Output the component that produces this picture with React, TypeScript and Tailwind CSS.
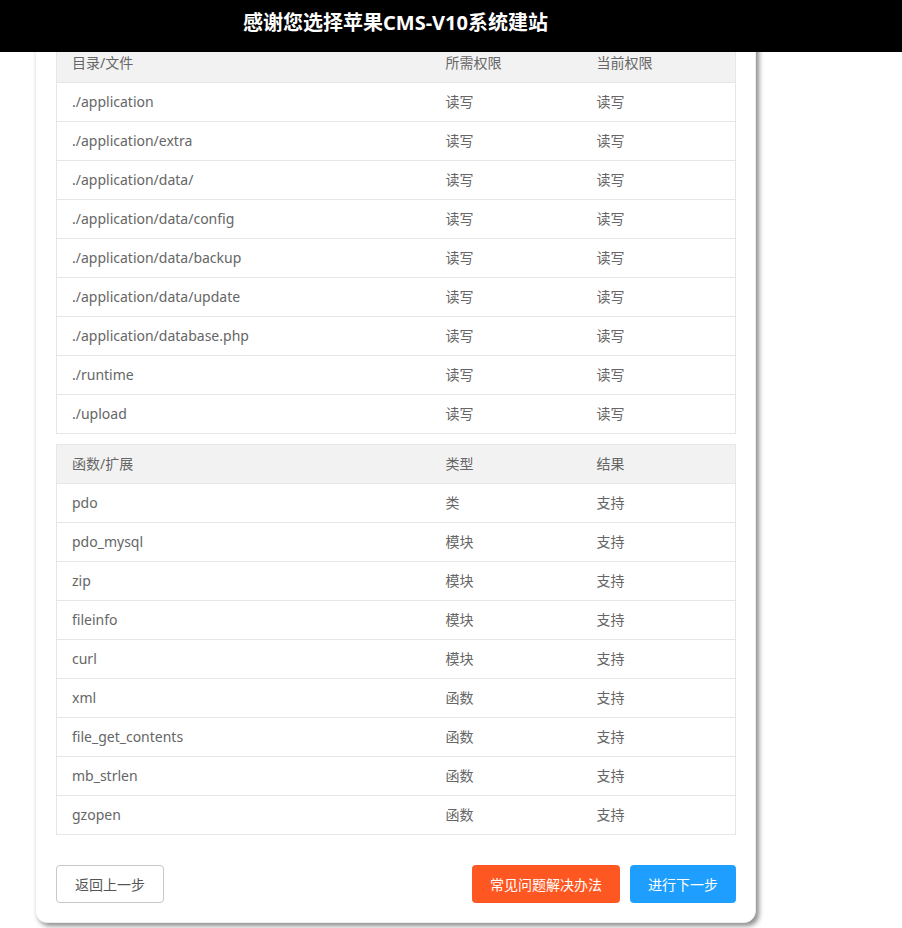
const dirs = [
  './application',
  './application/extra',
  './application/data/',
  './application/data/config',
  './application/data/backup',
  './application/data/update',
  './application/database.php',
  './runtime',
  './upload',
];

const exts = [
  { name: 'pdo', type: '类' },
  { name: 'pdo_mysql', type: '模块' },
  { name: 'zip', type: '模块' },
  { name: 'fileinfo', type: '模块' },
  { name: 'curl', type: '模块' },
  { name: 'xml', type: '函数' },
  { name: 'file_get_contents', type: '函数' },
  { name: 'mb_strlen', type: '函数' },
  { name: 'gzopen', type: '函数' },
];

function Row({ cells, head }: { cells: string[]; head?: boolean }) {
  return (
    <tr className={head ? 'bg-[#f2f2f2]' : 'bg-white'}>
      {cells.map((c, i) => (
        <td
          key={i}
          className={
            'border-b border-[#e6e6e6] px-[15px] py-[9px] leading-5 ' +
            (i === 0 ? 'w-[374px]' : i === 1 ? 'w-[151px]' : '')
          }
        >
          {c}
        </td>
      ))}
    </tr>
  );
}

export default function App() {
  return (
    <div className="min-h-[928px] bg-white font-['Noto_Sans','Noto_Sans_CJK_SC',sans-serif] text-[14px] text-[#666]">
      {/* fixed title bar */}
      <div className="fixed top-0 left-0 right-0 z-10 h-[52px] bg-black">
        <div className="ml-[35px] w-[721px] text-center text-[20px] font-bold leading-[46px] text-white">
          感谢您选择苹果CMS-V10系统建站
        </div>
      </div>

      <div className="pt-[22px] pl-[35px]">
        <div className="w-[721px] rounded-xl border border-[#eee] bg-white px-5 pt-5 pb-[19px] shadow-[3px_3px_5px_rgba(0,0,0,0.45)]">
          <table className="w-[680px] table-fixed border-collapse border border-[#e6e6e6]">
            <tbody>
              <Row head cells={['目录/文件', '所需权限', '当前权限']} />
              {dirs.map((d) => (
                <Row key={d} cells={[d, '读写', '读写']} />
              ))}
            </tbody>
          </table>

          <table className="mt-[10px] w-[680px] table-fixed border-collapse border border-[#e6e6e6]">
            <tbody>
              <Row head cells={['函数/扩展', '类型', '结果']} />
              {exts.map((e) => (
                <Row key={e.name} cells={[e.name, e.type, '支持']} />
              ))}
            </tbody>
          </table>

          <div className="mt-[30px] flex w-[680px] items-center">
            <button className="h-[38px] rounded-sm border border-[#c9c9c9] bg-white px-[18px] text-[#555]">
              返回上一步
            </button>
            <div className="ml-auto flex gap-[10px]">
              <button className="h-[38px] rounded-sm bg-[#ff5722] px-[18px] text-white">
                常见问题解决办法
              </button>
              <button className="h-[38px] rounded-sm bg-[#1e9fff] px-[18px] text-white">
                进行下一步
              </button>
            </div>
          </div>
        </div>
      </div>
    </div>
  );
}
